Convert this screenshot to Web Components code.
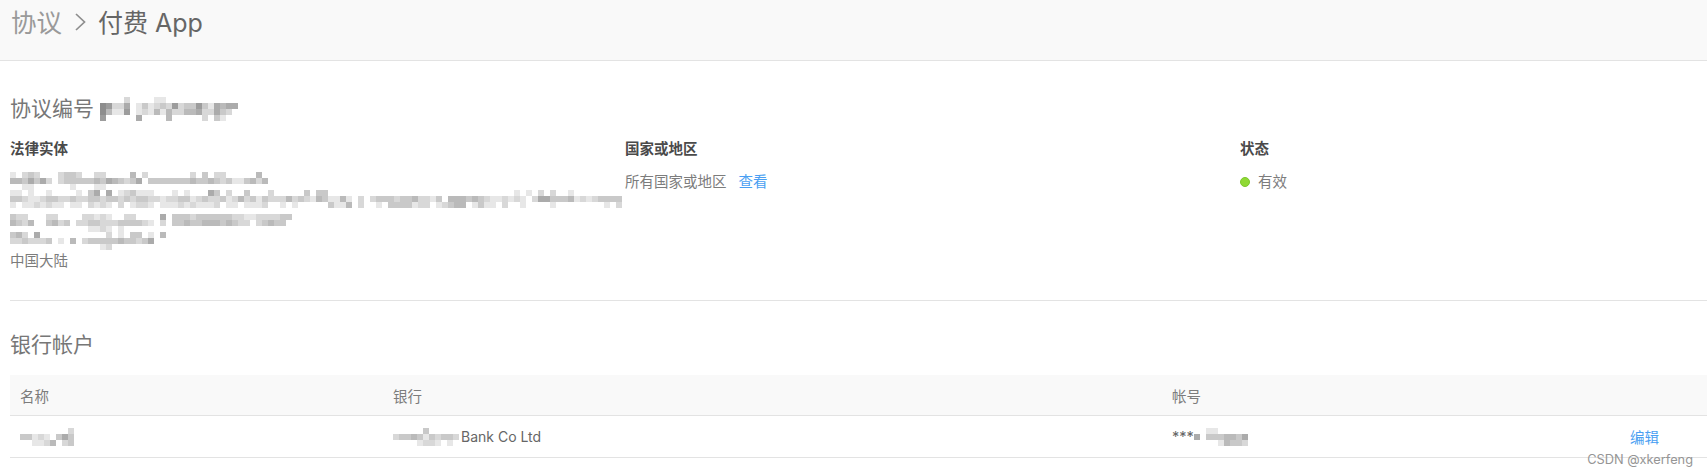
<!DOCTYPE html>
<html lang="zh">
<head>
<meta charset="utf-8">
<title>协议</title>
<style>
  html, body { margin: 0; background: #fff; }
  body {
    font-family: Inter, "Noto Sans CJK SC", sans-serif;
    color: #6e6e6e;
    height: 476px;
    overflow: hidden;
    position: relative;
  }
</style>
</head>
<body>
  <agr-header></agr-header>
  <agr-section heading="协议编号" pixels="user-id">
    <agr-terms></agr-terms>
  </agr-section>
  <agr-bank></agr-bank>
  <agr-watermark>CSDN @xkerfeng</agr-watermark>

<script>
// redacted text from the screenshot: each char is one 6px cell, higher digit = darker
const MOSAICS = {
  "user-id": [
    "....2....11.............",
    "76225.131232623363154550",
    "74116.1214142244522532..",
    "6.....5....4.....2.31...",
  ],
  "address": [
    "1.232...2332..22....4.2.......2.3.22.....4",
    "4435352.23333343543235.33333334334323113424",
    "..11......1...11",
    "11.1..1....1.35.5.123111...1.1...53.2..3...2.....3.33...............................1.1.2.2..1",
    "332112332232233233232332212233123223124231322242321431141.2.233323342213.4443432112121.25533341212333333333336",
    "1.1121211.11.2121.2.1221.1112121112.11.1112..1.1.....3114.2..1.3333122.12344.1311.2..1....1........1.2",
    "",
    "322...22....22121..22....5.33323333332211222233",
    "4324..3423.2233222333321.2.3343344434322.23433",
    ".............1121.1.....",
    "342.5...........2.1.33.1.4",
    "2232223.1.4.233333433235.",
    "...............12...",
  ],
  "name": ["........2", "33121.353", "..1124.23"],
  "bank": [".....3.....", "23343132332", "....1221.1."],
  "account": ["..11.....", "5.3334435", "....14332"],
};

class PixelBlock extends HTMLElement {
  connectedCallback() {
    const rows = MOSAICS[this.getAttribute("name")] || [];
    const cell = 6;
    const cols = Math.min(102, Math.max(...rows.map((r) => r.length)));
    let rects = "";
    rows.forEach((row, y) => {
      [...row.slice(0, cols)].forEach((ch, x) => {
        const d = parseInt(ch, 10);
        if (!d) return;
        const g = 246 - d * 15;
        rects += `<rect x="${x * cell}" y="${y * cell}" width="${cell}" height="${cell}" fill="rgb(${g},${g},${g})"/>`;
      });
    });
    const root = this.shadowRoot || this.attachShadow({ mode: "open" });
    root.innerHTML = `
      <style>
        :host { display: inline-block; line-height: 0; }
        svg { display: block; filter: blur(0.5px); }
      </style>
      <svg width="${cols * cell}" height="${rows.length * cell}" shape-rendering="crispEdges">${rects}</svg>
    `;
  }
}
customElements.define("pixel-block", PixelBlock);

class AgrHeader extends HTMLElement {
  constructor() {
    super();
    this.attachShadow({ mode: "open" }).innerHTML = `
      <style>
        :host {
          display: flex;
          align-items: center;
          box-sizing: border-box;
          height: 61px;
          padding: 0 10px 19px 11px;
          background: #f9f9f9;
          border-bottom: 1px solid #e3e3e3;
          font-size: 25px;
          color: #666;
        }
        .crumb { color: #9a9a9a; font-size: 25.5px; }
        svg { margin: 3px 12px 0 13px; }
      </style>
      <span class="crumb">协议</span>
      <svg width="11" height="18" viewBox="0 0 11 18" fill="none" stroke="#8e8e8e" stroke-width="1.7"><path d="M1 1l8.5 8L1 17"/></svg>
      <span>付费 App</span>
    `;
  }
}
customElements.define("agr-header", AgrHeader);

class AgrSection extends HTMLElement {
  constructor() {
    super();
    const pixels = this.getAttribute("pixels");
    this.attachShadow({ mode: "open" }).innerHTML = `
      <style>
        :host { display: block; padding: 32px 0 0 10px; }
        h2 {
          display: flex;
          align-items: center;
          gap: 6px;
          margin: 0;
          height: 28px;
          font-size: 21px;
          font-weight: 400;
          color: #777;
        }
        pixel-block { margin-top: 3px; }
      </style>
      <h2>${this.getAttribute("heading")}<pixel-block name="${pixels}"></pixel-block></h2>
      <slot></slot>
    `;
  }
}
customElements.define("agr-section", AgrSection);

class AgrTerms extends HTMLElement {
  constructor() {
    super();
    this.attachShadow({ mode: "open" }).innerHTML = `
      <style>
        :host {
          display: grid;
          grid-template-columns: 615px 615px 1fr;
          margin-top: 17px;
          padding-bottom: 29px;
          border-bottom: 1px solid #e3e3e3;
          font-size: 14.5px;
          line-height: 20px;
          color: #7c7c7c;
        }
        h3 { margin: 0 0 12px; font-size: 14.5px; line-height: 22px; font-weight: 700; color: #4a4a4a; }
        a { color: #4a9ff2; text-decoration: none; margin-left: 8px; }
        .address { margin-top: 3px; }
        .address pixel-block { display: block; margin-bottom: 1px; }
        .status { display: flex; align-items: center; gap: 8px; }
        .dot {
          width: 10px; height: 10px; border-radius: 50%;
          background: #8fd934;
          border: 1px solid #7cc72c;
          box-sizing: border-box;
        }
      </style>
      <div>
        <h3>法律实体</h3>
        <div class="address">
          <pixel-block name="address"></pixel-block>
          中国大陆
        </div>
      </div>
      <div>
        <h3>国家或地区</h3>
        <div>所有国家或地区 <a href="#">查看</a></div>
      </div>
      <div>
        <h3>状态</h3>
        <div class="status"><span class="dot"></span>有效</div>
      </div>
    `;
  }
}
customElements.define("agr-terms", AgrTerms);

class AgrBank extends HTMLElement {
  constructor() {
    super();
    this.attachShadow({ mode: "open" }).innerHTML = `
      <style>
        :host { display: block; padding: 29px 0 0 10px; font-size: 14.5px; color: #7c7c7c; }
        h2 { margin: 0 0 16px; height: 29px; line-height: 29px; font-size: 21px; font-weight: 400; color: #777; }
        .row {
          display: grid;
          grid-template-columns: 383px 779px 458px 1fr;
          align-items: center;
          border-bottom: 1px solid #e3e3e3;
        }
        .row > :first-child { padding-left: 10px; }
        .head { height: 40px; background: #f9f9f9; }
        .body { height: 41px; color: #666; }
        .cell { display: flex; align-items: center; }
        a { color: #4a9ff2; text-decoration: none; }
        .bank-name { margin-left: 2px; font-size: 14px; }
        .stars { font-size: 14.5px; }
      </style>
      <h2>银行帐户</h2>
      <div class="row head"><span>名称</span><span>银行</span><span>帐号</span><span></span></div>
      <div class="row body">
        <div class="cell name"><pixel-block name="name"></pixel-block></div>
        <div class="cell"><pixel-block name="bank"></pixel-block><span class="bank-name">Bank Co Ltd</span></div>
        <div class="cell"><span class="stars">***</span><pixel-block name="account"></pixel-block></div>
        <a href="#">编辑</a>
      </div>
    `;
  }
}
customElements.define("agr-bank", AgrBank);

class AgrWatermark extends HTMLElement {
  constructor() {
    super();
    this.attachShadow({ mode: "open" }).innerHTML = `
      <style>
        :host {
          position: absolute;
          right: 14px;
          top: 451px;
          font-size: 12.8px;
          line-height: 18px;
          color: #959595;
        }
      </style>
      <slot></slot>
    `;
  }
}
customElements.define("agr-watermark", AgrWatermark);
</script>
</body>
</html>
